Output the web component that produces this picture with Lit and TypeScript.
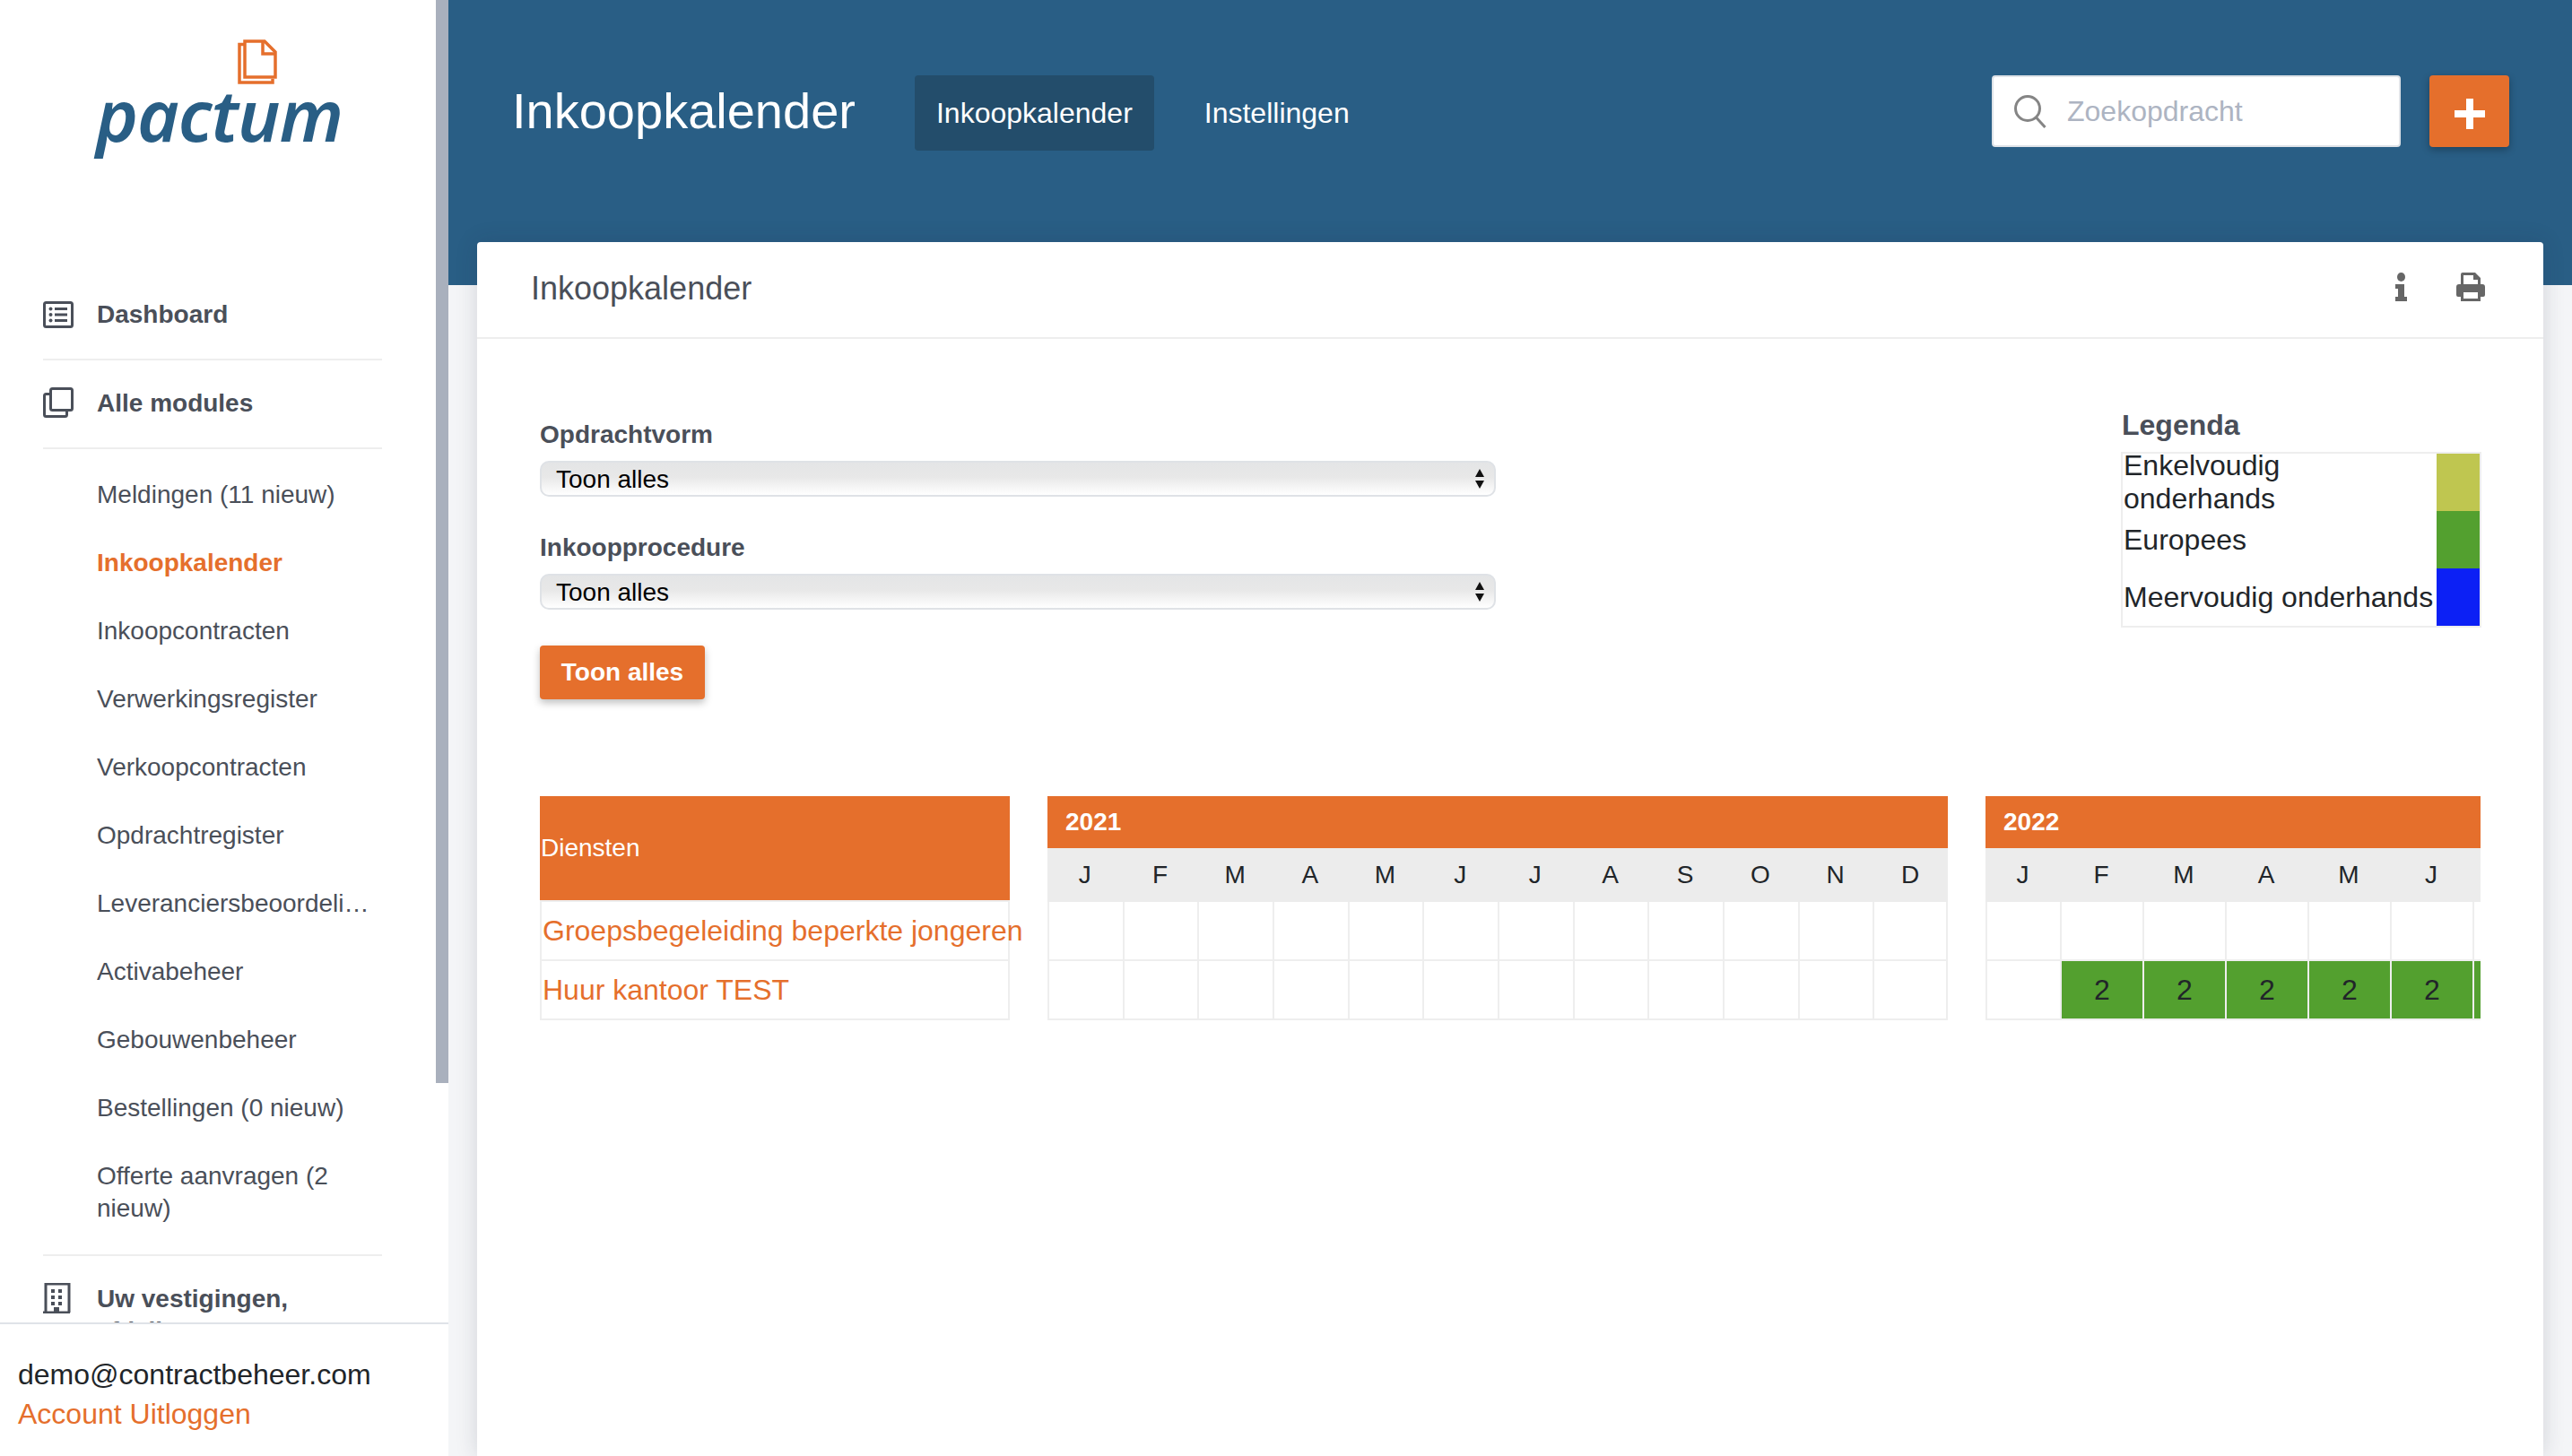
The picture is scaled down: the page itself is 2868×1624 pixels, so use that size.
import { LitElement, html, css } from "lit";
import { customElement } from "lit/decorators.js";

const MONTHS = ["J", "F", "M", "A", "M", "J", "J", "A", "S", "O", "N", "D"];
const SUB_ITEMS = [
  "Meldingen (11 nieuw)",
  "Inkoopkalender",
  "Inkoopcontracten",
  "Verwerkingsregister",
  "Verkoopcontracten",
  "Opdrachtregister",
  "Leveranciersbeoordelingen",
  "Activabeheer",
  "Gebouwenbeheer",
  "Bestellingen (0 nieuw)",
  "Offerte aanvragen (2 nieuw)",
];

@customElement("app-root")
export class AppRoot extends LitElement {
  static styles = css`
    :host {
      display: flex;
      width: 2868px;
      height: 1624px;
      overflow: hidden;
      background: #f4f5f7;
      font-family: "Liberation Sans", Arial, sans-serif;
      color: #212529;
      --orange: #e56f2c;
      --line: #eeeeee;
      --muted: #4a4f59;
    }

    /* sidebar */
    .sidebar {
      position: relative;
      z-index: 2;
      flex: 0 0 500px;
      display: flex;
      flex-direction: column;
      background: #fff;
      overflow: hidden;
    }
    .thumb {
      position: absolute;
      top: 0;
      right: 0;
      width: 14px;
      height: 1208px;
      background: #a9b0bd;
    }
    .logo {
      position: relative;
      height: 311px;
      flex: none;
    }
    .logo-doc {
      position: absolute;
      left: 265px;
      top: 44px;
    }
    .logo-text {
      position: absolute;
      left: 107px;
      top: 82px;
      font-family: "Noto Sans", sans-serif;
      font-style: italic;
      font-weight: 600;
      font-size: 80px;
      line-height: 90px;
      letter-spacing: -1px;
      color: #295e85;
    }
    .nav {
      flex: 1;
      min-height: 0;
      overflow: hidden;
      padding: 0 74px 0 48px;
    }
    .top-item {
      display: flex;
      align-items: flex-start;
      gap: 26px;
      padding: 22px 0;
      font-size: 28px;
      line-height: 36px;
      font-weight: 700;
      color: var(--muted);
      border-bottom: 2px solid var(--line);
    }
    .top-item svg {
      flex: 0 0 34px;
      display: block;
    }
    .top-item.first {
      padding: 22px 0 31px;
    }
    .top-item.second {
      padding: 30px 0 31px;
    }
    .top-item.last {
      border-bottom: 0;
      padding-top: 30px;
    }
    .sub-list {
      padding: 13px 0 13px 60px;
      border-bottom: 2px solid var(--line);
    }
    .sub-item {
      padding: 20px 0;
      margin-right: 6px;
      font-size: 28px;
      line-height: 36px;
      color: var(--muted);
      overflow: hidden;
      text-overflow: ellipsis;
    }
    .sub-item.active {
      color: var(--orange);
      font-weight: 700;
    }
    .account {
      flex: none;
      height: 149px;
      box-sizing: border-box;
      border-top: 2px solid #dfe3e8;
      padding: 34px 20px 0;
      font-size: 32px;
      line-height: 44px;
      background: #fff;
    }
    .account a {
      color: var(--orange);
      display: block;
    }

    /* header */
    .main {
      flex: 1;
      min-width: 0;
      display: flex;
      flex-direction: column;
    }
    .topbar {
      flex: 0 0 318px;
      box-sizing: border-box;
      display: flex;
      align-items: flex-start;
      padding: 84px 70px 0 71px;
      background: #295e85;
      color: #fff;
    }
    .topbar h1 {
      margin: 0 66px 0 0;
      font-size: 56px;
      font-weight: 400;
      line-height: 80px;
    }
    .tab {
      height: 84px;
      line-height: 84px;
      padding: 0 24px;
      margin-right: 8px;
      font-size: 32px;
      border-radius: 4px;
    }
    .tab.active {
      background: #234d6b;
    }
    .search {
      margin-left: auto;
      width: 456px;
      height: 80px;
      box-sizing: border-box;
      display: flex;
      align-items: center;
      gap: 22px;
      padding-left: 22px;
      background: #fff;
      border: 2px solid #dfe3e8;
      border-radius: 4px;
      font-size: 32px;
      color: #adb4c2;
    }
    .add {
      margin-left: 32px;
      width: 89px;
      height: 80px;
      display: flex;
      align-items: center;
      justify-content: center;
      background: var(--orange);
      border-radius: 4px;
      box-shadow: 0 3px 8px rgba(0, 0, 0, 0.3);
      padding-top: 6px;
      box-sizing: border-box;
    }

    /* card */
    .card {
      flex: 1;
      margin: -48px 32px 0;
      background: #fff;
      border-radius: 4px 4px 0 0;
      box-shadow: 0 0 24px rgba(30, 40, 60, 0.16);
    }
    .card-head {
      height: 108px;
      box-sizing: border-box;
      display: flex;
      align-items: center;
      padding: 0 65px 0 60px;
      border-bottom: 2px solid var(--line);
      font-size: 36px;
      color: var(--muted);
    }
    .card-head .title {
      flex: 1;
      padding-bottom: 2px;
    }
    .card-head svg {
      display: block;
      margin-left: 55px;
      margin-top: -6px;
    }
    .card-body {
      padding: 0 70px;
    }
    .filters {
      display: flex;
      justify-content: space-between;
      height: 510px;
      padding-top: 89px;
      box-sizing: border-box;
    }
    .form {
      width: 1066px;
    }
    .form label {
      display: block;
      font-size: 28px;
      font-weight: 700;
      line-height: 36px;
      color: var(--muted);
      margin-bottom: 11px;
    }
    .select {
      position: relative;
      height: 40px;
      margin-bottom: 39px;
    }
    .select select {
      display: block;
      width: 100%;
      height: 40px;
      box-sizing: border-box;
      appearance: none;
      padding: 0 0 0 16px;
      border: 2px solid #dfe2e6;
      border-radius: 10px;
      background: linear-gradient(#e4e5e6 0%, #e8e8e8 45%, #ffffff 100%);
      font: 28px "Liberation Sans", Arial, sans-serif;
      color: #000;
    }
    .select svg {
      position: absolute;
      right: 12px;
      top: 8px;
      pointer-events: none;
    }
    .btn {
      display: block;
      width: 184px;
      height: 60px;
      margin-top: 40px;
      padding: 0;
      border: 0;
      border-radius: 4px;
      background: var(--orange);
      color: #fff;
      font: 700 28px "Liberation Sans", Arial, sans-serif;
      box-shadow: 0 4px 8px rgba(0, 0, 0, 0.25);
    }
    .legend {
      width: 402px;
      margin-right: -1px;
    }
    .legend h3 {
      margin: -13px 0 10px 1px;
      font-size: 32px;
      line-height: 40px;
      color: var(--muted);
    }
    .legend-box {
      border: 2px solid var(--line);
    }
    .legend-row {
      display: flex;
      height: 64px;
      align-items: center;
      font-size: 32px;
      padding-left: 1px;
    }
    .legend-row span {
      flex: 1;
    }
    .legend-row i {
      display: block;
      width: 48px;
      height: 64px;
    }

    /* calendar */
    .calendar {
      display: flex;
      gap: 42px;
      align-items: flex-start;
    }
    .services {
      width: 524px;
    }
    .services-head {
      height: 116px;
      line-height: 116px;
      padding-left: 1px;
      background: var(--orange);
      color: #fff;
      font-size: 28px;
    }
    .services-row {
      height: 64px;
      line-height: 64px;
      padding-left: 1px;
      color: var(--orange);
      font-size: 32px;
      border: 2px solid var(--line);
      border-bottom: 0;
      white-space: nowrap;
    }
    .services-row:last-child {
      border-bottom: 2px solid var(--line);
    }
    .year {
      flex: none;
      overflow: hidden;
    }
    .year.y2021 {
      width: 1004px;
    }
    .year.y2022 {
      width: 552px;
    }
    .year-head {
      height: 58px;
      line-height: 58px;
      padding-left: 20px;
      background: var(--orange);
      color: #fff;
      font-size: 28px;
      font-weight: 700;
    }
    .grid {
      display: grid;
    }
    .y2021 .grid {
      grid-template-columns: repeat(12, 1fr);
    }
    .y2022 .grid {
      grid-template-columns: 83px repeat(11, 92px);
      width: 1095px;
    }
    .month {
      height: 60px;
      line-height: 60px;
      text-align: center;
      background: #ececec;
      font-size: 28px;
    }
    .cell {
      height: 64px;
      line-height: 64px;
      text-align: center;
      font-size: 32px;
      border-left: 2px solid var(--line);
      border-bottom: 2px solid var(--line);
    }
    .y2021 .cell:nth-child(12n) {
      border-right: 2px solid var(--line);
    }
    .cell.filled {
      background: #53a02f;
    }
  `;

  private icon(name: string) {
    if (name === "dashboard") {
      return html`<svg width="34" height="30" viewBox="0 0 34 30" style="margin-top:3px">
        <rect x="1.5" y="1.5" width="31" height="27" rx="2" fill="none" stroke="#4a4f59" stroke-width="3" />
        <circle cx="8.5" cy="8.5" r="2" fill="#4a4f59" /><circle cx="8.5" cy="15" r="2" fill="#4a4f59" /><circle cx="8.5" cy="21.5" r="2" fill="#4a4f59" />
        <path d="M13 8.5h14M13 15h14M13 21.5h14" stroke="#4a4f59" stroke-width="3" />
      </svg>`;
    }
    if (name === "modules") {
      return html`<svg width="34" height="34" viewBox="0 0 34 34" fill="none" stroke="#4a4f59" stroke-width="3">
        <rect x="8.5" y="1.5" width="24" height="24" rx="2" />
        <path d="M8.5 7.5H3.5a2 2 0 0 0-2 2v21a2 2 0 0 0 2 2h21a2 2 0 0 0 2-2v-5" />
      </svg>`;
    }
    return html`<svg width="34" height="34" viewBox="0 0 34 34">
      <path d="M3 33V1h26v32" fill="none" stroke="#4a4f59" stroke-width="3" />
      <path d="M0 31.5h30v2.5H0z" fill="#4a4f59" />
      <path d="M9 7h4v4H9zM17 7h4v4h-4zM9 14h4v4H9zM17 14h4v4h-4zM9 21h4v4H9zM17 21h4v4h-4zM12 27h6v5h-6z" fill="#4a4f59" />
    </svg>`;
  }

  private renderSelect() {
    return html`<div class="select">
      <select><option>Toon alles</option></select>
      <svg width="12" height="24" viewBox="0 0 12 24" fill="#111">
        <path d="M6 1l5 9H1zM6 23l-5-9h10z" />
      </svg>
    </div>`;
  }

  private renderYear(year: string, cls: string, filled: boolean) {
    return html`<div class="year ${cls}">
      <div class="year-head">${year}</div>
      <div class="grid">
        ${MONTHS.map((m) => html`<div class="month">${m}</div>`)}
        ${MONTHS.map(() => html`<div class="cell"></div>`)}
        ${MONTHS.map((_, i) =>
          filled && i > 0
            ? html`<div class="cell filled">2</div>`
            : html`<div class="cell"></div>`
        )}
      </div>
    </div>`;
  }

  render() {
    return html`
      <aside class="sidebar">
        <div class="logo">
          <svg class="logo-doc" width="44" height="50" viewBox="0 0 44 50" fill="none" stroke="#e56f2c" stroke-width="3.5">
            <path d="M8 5.5H2v42.5h37v-4" />
            <path d="M8 2h22l12 12v28H8z" />
            <path d="M28 2v14h14" />
          </svg>
          <div class="logo-text">pactum</div>
        </div>
        <div class="nav">
          <div class="top-item first">${this.icon("dashboard")}<span>Dashboard</span></div>
          <div class="top-item second">${this.icon("modules")}<span>Alle modules</span></div>
          <div class="sub-list">
            ${SUB_ITEMS.map(
              (item) =>
                html`<div class="sub-item ${item === "Inkoopkalender" ? "active" : ""}">${item}</div>`
            )}
          </div>
          <div class="top-item last">${this.icon("building")}<span>Uw vestigingen, afdelingen en personen</span></div>
        </div>
        <div class="account">
          <div>demo@contractbeheer.com</div>
          <a>Account Uitloggen</a>
        </div>
        <div class="thumb"></div>
      </aside>
      <div class="main">
        <header class="topbar">
          <h1>Inkoopkalender</h1>
          <div class="tab active">Inkoopkalender</div>
          <div class="tab" style="margin-left:24px">Instellingen</div>
          <div class="search">
            <svg width="38" height="38" viewBox="0 0 38 38" fill="none" stroke="#858585" stroke-width="3">
              <circle cx="16" cy="16" r="13.5" />
              <path d="M25.5 26l10 11" />
            </svg>
            <span>Zoekopdracht</span>
          </div>
          <div class="add">
            <svg width="34" height="34" viewBox="0 0 34 34" fill="#fff"><path d="M13 0h8v13h13v8H21v13h-8V21H0v-8h13z" /></svg>
          </div>
        </header>
        <section class="card">
          <div class="card-head">
            <div class="title">Inkoopkalender</div>
            <svg width="13" height="32" viewBox="0 0 13 32" fill="#666">
              <ellipse cx="6.5" cy="5" rx="4.5" ry="5" />
              <path d="M0 13h10v14h3v5H0v-5h3v-9H0z" />
            </svg>
            <svg width="32" height="32" viewBox="0 0 32 32" fill="#666" fill-rule="evenodd">
              <path d="M5 13V2a2 2 0 0 1 2-2h14l6 6v7h-3V8h-5V3H8v10z" />
              <path d="M3 13h26a3 3 0 0 1 3 3v9a2 2 0 0 1-2 2h-3v5H5v-5H2a2 2 0 0 1-2-2v-9a3 3 0 0 1 3-3zM8 22v7h16v-7z" />
            </svg>
          </div>
          <div class="card-body">
            <div class="filters">
              <div class="form">
                <label>Opdrachtvorm</label>
                ${this.renderSelect()}
                <label>Inkoopprocedure</label>
                ${this.renderSelect()}
                <button class="btn">Toon alles</button>
              </div>
              <div class="legend">
                <h3>Legenda</h3>
                <div class="legend-box">
                  <div class="legend-row"><span>Enkelvoudig onderhands</span><i style="background:#bfc650"></i></div>
                  <div class="legend-row"><span>Europees</span><i style="background:#53a02f"></i></div>
                  <div class="legend-row"><span>Meervoudig onderhands</span><i style="background:#0c20f5"></i></div>
                </div>
              </div>
            </div>
            <div class="calendar">
              <div class="services">
                <div class="services-head">Diensten</div>
                <div class="services-row">Groepsbegeleiding beperkte jongeren</div>
                <div class="services-row">Huur kantoor TEST</div>
              </div>
              ${this.renderYear("2021", "y2021", false)}
              ${this.renderYear("2022", "y2022", true)}
            </div>
          </div>
        </section>
      </div>
    `;
  }
}
